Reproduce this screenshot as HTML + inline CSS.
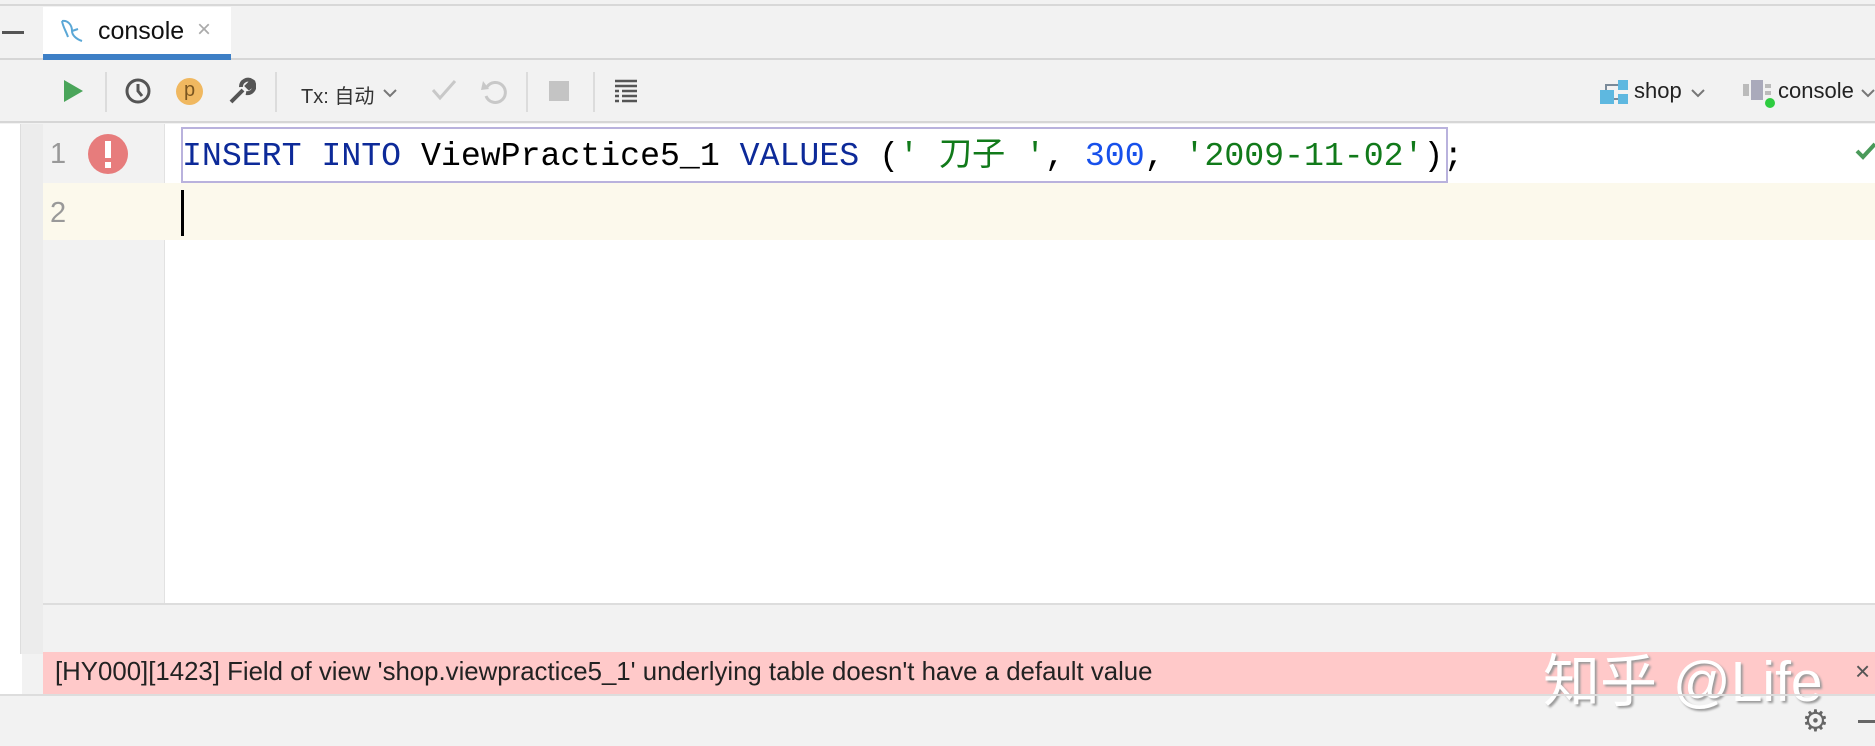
<!DOCTYPE html>
<html><head><meta charset="utf-8"><style>
*{margin:0;padding:0;box-sizing:border-box}
body{width:1875px;height:746px;position:relative;overflow:hidden;background:#f2f2f2;font-family:"Liberation Sans","Noto Sans CJK SC",sans-serif}
.a{position:absolute}
.mono{font-family:"Liberation Mono","Noto Sans CJK SC",monospace;font-size:33.2px;white-space:pre}
.sep{position:absolute;top:72px;width:2px;height:40px;background:#dcdcdc}
</style></head><body>
<div class="a" style="left:0;top:0;width:1875px;height:6px;background:#f2f2f2;border-bottom:2px solid #d8d8d8"></div>
<div class="a" style="left:0;top:6px;width:1875px;height:54px;background:#f2f2f2;border-bottom:2px solid #d6d6d6"></div>
<div class="a" style="left:2px;top:31px;width:22px;height:3px;background:#555"></div>
<div class="a" style="left:43px;top:7px;width:188px;height:53px;background:#fff"></div>
<div class="a" style="left:43px;top:54px;width:188px;height:6px;background:#3d7fc6"></div>
<svg class="a" style="left:58px;top:17px" width="30" height="30" viewBox="0 0 30 30"><path d="M4 4 C10 3 14 8 14 14 C14 18 18 22 24 24 M4 4 C5 10 8 14 10 20 M14 14 L20 12" stroke="#5aa7d6" stroke-width="2" fill="none"/></svg>
<div class="a" style="left:98px;top:17px;font-size:25px;color:#111">console</div>
<div class="a" style="left:197px;top:16px;font-size:24px;color:#aaa">×</div>
<div class="a" style="left:0;top:62px;width:1875px;height:61px;background:#f2f2f2;border-bottom:2px solid #d6d6d6"></div>
<svg class="a" style="left:62px;top:79px" width="22" height="24"><path d="M2 1 L21 12 L2 23Z" fill="#4aa55a"/></svg>
<div class="sep" style="left:105px"></div>
<svg class="a" style="left:124px;top:77px" width="28" height="28"><circle cx="14" cy="14" r="11" stroke="#555" stroke-width="3" fill="none"/><path d="M14 7 V14 L18 19" stroke="#555" stroke-width="3" fill="none"/></svg>
<div class="a" style="left:176px;top:78px;width:27px;height:27px;border-radius:50%;background:#f0b860;color:#7a5520;font-size:20px;text-align:center;line-height:25px">p</div>
<svg class="a" style="left:228px;top:77px" width="28" height="28"><path d="M3 25 L15 13 M13 10 A7 7 0 0 1 24 4 L19 9 L21 11 L26 7 A7 7 0 0 1 18 16" stroke="#555" stroke-width="4" fill="none"/></svg>
<div class="sep" style="left:275px"></div>
<div class="a" style="left:301px;top:80px;font-size:20px;color:#333">Tx: 自动</div>
<svg class="a" style="left:382px;top:88px" width="16" height="12"><path d="M2 2 L8 8 L14 2" stroke="#777" stroke-width="2" fill="none"/></svg>
<svg class="a" style="left:430px;top:78px" width="28" height="24"><path d="M3 12 L10 20 L25 3" stroke="#c8c8c8" stroke-width="3" fill="none"/></svg>
<svg class="a" style="left:480px;top:78px" width="28" height="28"><path d="M7 9 A10 10 0 1 1 6 18" stroke="#c8c8c8" stroke-width="3" fill="none"/><path d="M3 3 L9 11 L1 12Z" fill="#c8c8c8"/></svg>
<div class="sep" style="left:526px"></div>
<div class="a" style="left:549px;top:81px;width:20px;height:20px;background:#c4c4c4"></div>
<div class="sep" style="left:593px"></div>
<svg class="a" style="left:613px;top:79px" width="26" height="24"><path d="M2 2H24M2 7H24M9 12H24M9 17H24M9 22H24M2 12H6M2 17H6M2 22H6" stroke="#555" stroke-width="2.5"/></svg>
<svg class="a" style="left:1600px;top:78px" width="30" height="28"><rect x="0" y="12" width="14" height="14" fill="#5eb8e0"/><rect x="18" y="2" width="10" height="10" fill="#5eb8e0"/><rect x="18" y="16" width="10" height="10" fill="#5eb8e0"/><path d="M6 12V7H18M14 21H18" stroke="#7a8a99" stroke-width="2" fill="none"/></svg>
<div class="a" style="left:1634px;top:78px;font-size:22px;color:#222">shop</div>
<svg class="a" style="left:1690px;top:88px" width="16" height="12"><path d="M2 2 L8 8 L14 2" stroke="#777" stroke-width="2" fill="none"/></svg>
<svg class="a" style="left:1743px;top:78px" width="34" height="32"><rect x="0" y="6" width="6" height="12" fill="#bbb"/><rect x="8" y="2" width="12" height="20" fill="#aab"/><rect x="22" y="6" width="6" height="4" fill="#bbb"/><rect x="22" y="13" width="6" height="4" fill="#bbb"/><circle cx="27" cy="25" r="5" fill="#2ecc40"/></svg>
<div class="a" style="left:1778px;top:78px;font-size:22px;color:#222">console</div>
<svg class="a" style="left:1860px;top:88px" width="16" height="12"><path d="M2 2 L8 8 L14 2" stroke="#777" stroke-width="2" fill="none"/></svg>
<div class="a" style="left:0;top:124px;width:22px;height:570px;background:#fff"></div>
<div class="a" style="left:20px;top:124px;width:23px;height:530px;background:#ececec;border-left:1px solid #ddd"></div>
<div class="a" style="left:43px;top:124px;width:1832px;height:479px;background:#fff"></div>
<div class="a" style="left:43px;top:124px;width:122px;height:479px;background:#f2f2f2;border-right:1px solid #e2e2e2"></div>
<div class="a" style="left:43px;top:183px;width:1832px;height:57px;background:#fcf9ec"></div>
<div class="a" style="left:181px;top:127px;width:1267px;height:56px;border:2px solid #b9b2dd"></div>
<div class="a" style="left:50px;top:138px;font-size:29px;color:#999">1</div>
<div class="a" style="left:50px;top:197px;font-size:29px;color:#999">2</div>
<div class="a" style="left:88px;top:134px;width:40px;height:40px;border-radius:50%;background:#e77c7c"></div>
<div class="a" style="left:105px;top:141px;width:6px;height:17px;background:#fff"></div>
<div class="a" style="left:105px;top:162px;width:6px;height:6px;background:#fff"></div>
<div class="a mono" style="left:182px;top:126px;color:#000"><span style="color:#0d2a99">INSERT INTO</span> ViewPractice5_1 <span style="color:#0d2a99">VALUES</span> (<span style="color:#117a1a">' 刀子 '</span>, <span style="color:#1750eb">300</span>, <span style="color:#117a1a">'2009-11-02'</span>);</div>
<div class="a" style="left:181px;top:190px;width:3px;height:46px;background:#000"></div>
<svg class="a" style="left:1855px;top:141px" width="22" height="20"><path d="M2 10 L8 16 L20 3" stroke="#4a9a5a" stroke-width="4" fill="none"/></svg>
<div class="a" style="left:43px;top:603px;width:1832px;height:2px;background:#ddd"></div>
<div class="a" style="left:43px;top:652px;width:1832px;height:42px;background:#ffc9c9"></div>
<div class="a" style="left:55px;top:658px;font-size:25.8px;color:#222">[HY000][1423] Field of view 'shop.viewpractice5_1' underlying table doesn't have a default value</div>
<div class="a" style="left:1543px;top:636px;font-size:57px;color:#fff;text-shadow:2px 2px 2px #999">知乎 @Life</div>
<div class="a" style="left:1855px;top:656px;font-size:26px;color:#555">×</div>
<div class="a" style="left:0;top:694px;width:1875px;height:2px;background:#ddd"></div>
<div class="a" style="left:1802px;top:704px;font-size:30px;color:#666">⚙</div>
<div class="a" style="left:1858px;top:720px;width:17px;height:3px;background:#666"></div>
</body></html>
